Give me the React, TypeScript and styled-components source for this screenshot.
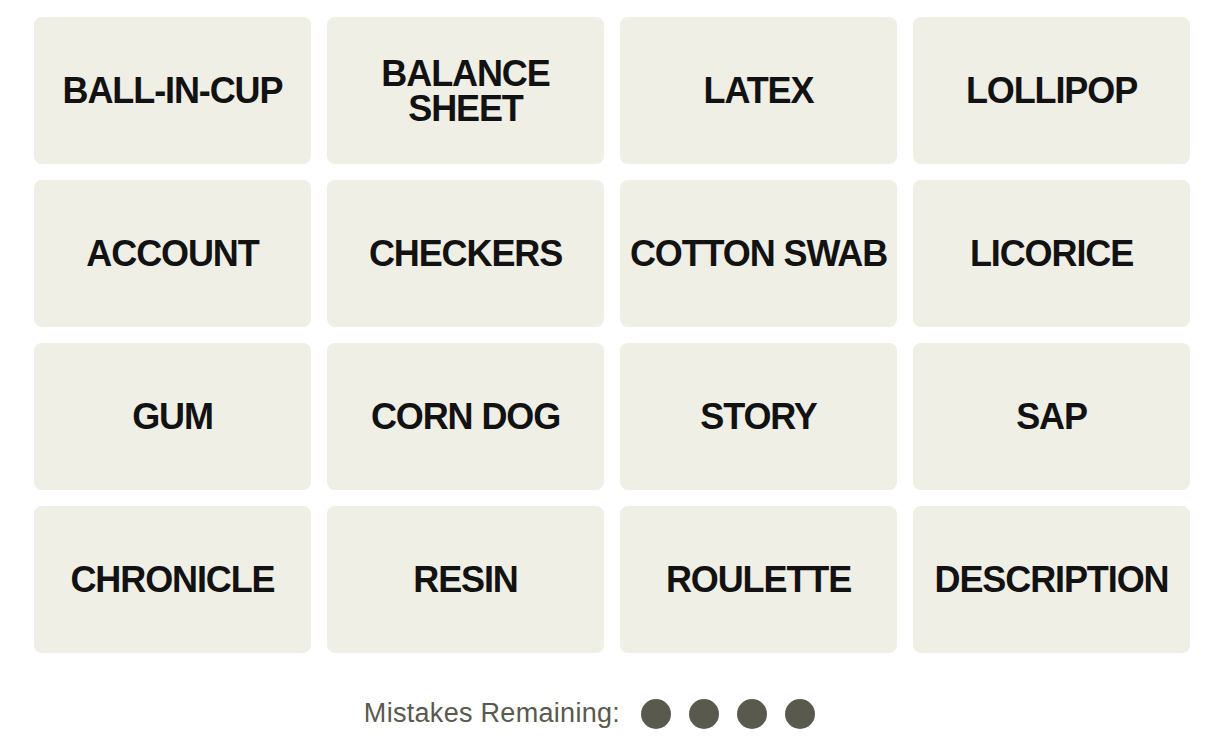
import styled, { createGlobalStyle } from "styled-components";

const GlobalStyle = createGlobalStyle`
  html, body {
    margin: 0;
    padding: 0;
    background: #ffffff;
  }
`;

const Page = styled.div`
  width: 1215px;
  height: 750px;
  box-sizing: border-box;
  padding: 17px 25px 0 34px;
  display: flex;
  flex-direction: column;
  align-items: stretch;
  font-family: "Liberation Sans", Arial, sans-serif;
`;

const Board = styled.div`
  display: grid;
  grid-template-columns: repeat(4, 277px);
  grid-auto-rows: 147px;
  gap: 16px;
`;

const Tile = styled.button`
  border: none;
  margin: 0;
  padding: 0 6px;
  background: #efefe6;
  border-radius: 8px;
  display: flex;
  flex-direction: column;
  align-items: center;
  justify-content: center;
  text-align: center;
  font-family: "Liberation Sans", Arial, sans-serif;
  font-weight: 700;
  font-size: 36px;
  line-height: 40px;
  letter-spacing: -1.1px;
  color: #121212;
  text-transform: uppercase;
  cursor: pointer;
`;

const Line = styled.span`
  display: block;
  line-height: 35px;
`;

const Footer = styled.div`
  display: flex;
  align-items: center;
  justify-content: center;
  gap: 18px;
  margin-top: 45px;
  padding-right: 45px;
`;

const Label = styled.span`
  font-size: 27px;
  letter-spacing: 0.3px;
  color: #5a594e;
  margin-right: 3px;
`;

const Dot = styled.span`
  width: 30px;
  height: 30px;
  border-radius: 50%;
  background: #5a594e;
`;

const words = [
  "Ball-in-cup",
  "Balance sheet",
  "Latex",
  "Lollipop",
  "Account",
  "Checkers",
  "Cotton swab",
  "Licorice",
  "Gum",
  "Corn dog",
  "Story",
  "Sap",
  "Chronicle",
  "Resin",
  "Roulette",
  "Description",
];

export default function App() {
  return (
    <>
      <GlobalStyle />
      <Page>
        <Board>
          {words.map((w) => (
            <Tile key={w}>
              {w === "Balance sheet" ? (
                <>
                  <Line>Balance</Line>
                  <Line>Sheet</Line>
                </>
              ) : (
                w
              )}
            </Tile>
          ))}
        </Board>
        <Footer>
          <Label>Mistakes Remaining:</Label>
          {[0, 1, 2, 3].map((i) => (
            <Dot key={i} />
          ))}
        </Footer>
      </Page>
    </>
  );
}
